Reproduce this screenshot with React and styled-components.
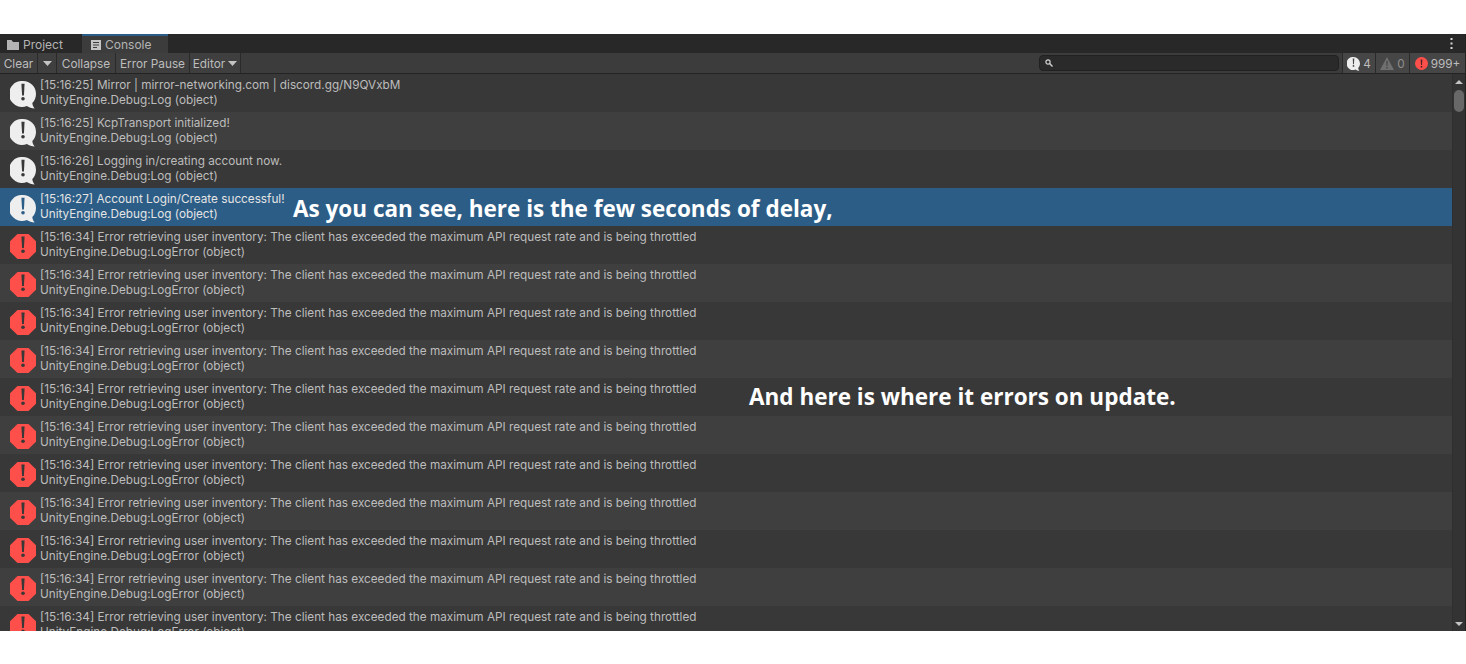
import React from 'react'
import styled, { createGlobalStyle } from 'styled-components'

const Global = createGlobalStyle`
html, body { margin:0; padding:0; background:#fff; }
body { font-family:Inter, "Liberation Sans", sans-serif; }
`

const Page = styled.div`
width:1466px;
height:664px;
padding:34px 0 33px;
box-sizing:border-box;
overflow:hidden;
`
const Editor = styled.div`
height:597px;
display:flex;
flex-direction:column;
background:#383838;
border-right:1px solid #232323;
box-sizing:border-box;
`
const TabBar = styled.div`
height:19px;
flex:none;
display:flex;
background:#282828;
`
const Tab = styled.div`
width:${p => p.$w}px;
display:flex;
align-items:center;
gap:${p => p.$gap}px;
padding-left:${p => p.$pad}px;
padding-top:${p => p.$active ? 0 : 2}px;
box-sizing:border-box;
font-size:12px;
color:#b4b4b4;
background:${p => p.$active ? '#3c3c3c' : 'transparent'};
border-top:${p => p.$active ? '2px solid #2c5d87' : 'none'};
`
const TabMenu = styled.div`
margin-left:auto;
width:27px;
display:flex;
align-items:center;
justify-content:center;
`
const Toolbar = styled.div`
height:21px;
flex:none;
display:flex;
align-items:stretch;
background:#3c3c3c;
border-bottom:1px solid #232323;
box-sizing:border-box;
`
const ToolButton = styled.div`
display:flex;
align-items:center;
justify-content:center;
gap:3px;
width:${p => p.$w}px;
padding-top:1px;
box-sizing:border-box;
font-size:11.8px;
color:#bdbdbd;
background:#3f3f3f;
border-right:1px solid #2a2a2a;
white-space:nowrap;
`
const Split = styled.span`
width:1px;
height:14px;
align-self:center;
background:#2a2a2a;
margin:0 0 0 -1px;
`
const Spacer = styled.div`
flex:1;
`
const Search = styled.div`
width:300px;
height:16px;
margin:2px 3px 0 0;
display:flex;
align-items:center;
padding-left:5px;
box-sizing:border-box;
background:#2a2a2a;
border:1px solid #212121;
border-radius:4px;
`
const Counter = styled.div`
width:${p => p.$w}px;
display:flex;
align-items:center;
justify-content:center;
gap:3px;
padding-top:1px;
box-sizing:border-box;
font-size:11.75px;
color:${p => p.$dim ? '#8f8f8f' : '#bdbdbd'};
background:#464646;
border-left:1px solid #2a2a2a;
`
const Body = styled.div`
flex:1;
min-height:0;
display:flex;
`
const List = styled.div`
flex:1;
min-width:0;
overflow:hidden;
`
const Row = styled.div`
position:relative;
height:38px;
display:flex;
align-items:flex-start;
box-sizing:border-box;
background:${p => p.$selected ? '#2c5d87' : p.$alt ? '#3f3f3f' : '#383838'};
`
const IconBox = styled.div`
width:40px;
height:38px;
flex:none;
display:flex;
align-items:flex-start;
padding:${p => p.$error ? 8 : 7}px 0 0 10px;
box-sizing:border-box;
`
const Lines = styled.div`
padding-top:4px;
font-size:11.75px;
line-height:15px;
color:${p => p.$selected ? '#e4e4e4' : '#bdbdbd'};
white-space:nowrap;
`
const Note = styled.div`
position:absolute;
left:${p => p.$left}px;
top:${p => p.$top}px;
font-family:"Open Sans", sans-serif;
font-size:22.5px;
line-height:28px;
font-weight:700;
color:#fff;
white-space:nowrap;
`
const Scrollbar = styled.div`
position:relative;
width:13px;
flex:none;
background:#333;
border-left:1px solid #2e2e2e;
box-sizing:border-box;
`
const Thumb = styled.div`
position:absolute;
left:1px;
top:16px;
width:10px;
height:22px;
border-radius:5px;
background:#686868;
`
const ArrowUp = styled.div`
position:absolute;
left:2px;
top:6px;
border-left:4px solid transparent;
border-right:4px solid transparent;
border-bottom:4px solid #c4c4c4;
`
const ArrowDown = styled.div`
position:absolute;
left:2px;
bottom:5px;
border-left:4px solid transparent;
border-right:4px solid transparent;
border-top:4px solid #c4c4c4;
`

// small triangle for the dropdown buttons
const Caret = () => (
  <svg width="9" height="5" viewBox="0 0 9 5"><path d="M0 0h9L4.5 5z" fill="#c4c4c4" /></svg>
)

const InfoIcon = ({ size = 26, mark = '#383838' }) => (
  <svg width={size} height={size * 28 / 26} viewBox="0 0 26 28" style={{ flex: 'none' }}>
    <path d="M13 0a13 13 0 0 1 13 13c0 3.600-1.400 6.800-3.700 9.100.2 2 1 3.900 2.400 5.400-2.900-.1-5.600-1-7.800-2.500A13 13 0 1 1 13 0z" fill="#eeeeee" />
    <path d="M11.400 2.800h3.200l-.7 11.700h-1.800z" fill={mark} />
    <circle cx="13" cy="17.800" r="1.800" fill={mark} />
  </svg>
)

const ErrorIcon = ({ mark = '#383838' }) => (
  <svg width="26" height="25" viewBox="0 0 26 25">
    <path d="M7.500 0h11L26 7.200v10.600L18.500 25h-11L0 17.800V7.200z" fill="#fe4f4a" />
    <path d="M11.400 2.500h3.200l-.7 11.500h-1.800z" fill={mark} />
    <circle cx="13" cy="17.300" r="1.800" fill={mark} />
  </svg>
)

const rows = [
  { kind: 'info', text: '[15:16:25] Mirror | mirror-networking.com | discord.gg/N9QVxbM' },
  { kind: 'info', text: '[15:16:25] KcpTransport initialized!' },
  { kind: 'info', text: '[15:16:26] Logging in/creating account now.' },
  { kind: 'info', text: '[15:16:27] Account Login/Create successful!', selected: true, note: 'As you can see, here is the few seconds of delay,', noteLeft: 293, noteTop: 7 },
  ...Array.from({ length: 11 }, (_, i) => ({
    kind: 'error',
    text: '[15:16:34] Error retrieving user inventory: The client has exceeded the maximum API request rate and is being throttled',
    note: i === 4 ? 'And here is where it errors on update.' : null,
    noteLeft: 749,
    noteTop: 5,
  })),
]

const App = () => {
  return (
    <Page>
      <Global />
      <Editor>
        <TabBar>
          <Tab $w={82} $pad={7} $gap={4}>
            <svg width="12" height="10" viewBox="0 0 12 10"><path d="M0 0h4.500l1.500 2H12v8H0z" fill="#b4b4b4" /></svg>
            Project
          </Tab>
          <Tab $w={86} $pad={9} $gap={4} $active>
            <svg width="10" height="10" viewBox="0 0 10 10">
              <path d="M0 0h10v10H0z" fill="#c4c4c4" />
              <path d="M2 2.500h6M2 5h6M2 7.500h4" stroke="#3c3c3c" strokeWidth="1" />
            </svg>
            Console
          </Tab>
          <TabMenu>
            <svg width="3" height="11" viewBox="0 0 3 11">
              <path d="M0.500 0h2v2h-2zM0.500 4.500h2v2h-2zM0.500 9h2v2h-2z" fill="#d8d8d8" />
            </svg>
          </TabMenu>
        </TabBar>
        <Toolbar>
          <ToolButton $w={38}>Clear</ToolButton>
          <Split />
          <ToolButton $w={19}><Caret /></ToolButton>
          <ToolButton $w={59}>Collapse</ToolButton>
          <ToolButton $w={74}>Error Pause</ToolButton>
          <ToolButton $w={51}>Editor <Caret /></ToolButton>
          <Spacer />
          <Search>
            <svg width="8" height="8" viewBox="0 0 8 8">
              <circle cx="3" cy="3" r="2.100" fill="none" stroke="#d0d0d0" strokeWidth="1.200" />
              <path d="M4.600 4.600 7.500 7.500" stroke="#d0d0d0" strokeWidth="1.400" />
            </svg>
          </Search>
          <Counter $w={33}>
            <InfoIcon size={13} mark="#464646" />4
          </Counter>
          <Counter $w={34} $dim>
            <svg width="14" height="13" viewBox="0 0 14 13">
              <path d="M7 0l7 13H0z" fill="#6f6f6f" />
              <path d="M6.300 4h1.400l-.2 5h-1zM6.300 10h1.400v1.400H6.300z" fill="#464646" />
            </svg>
            0
          </Counter>
          <Counter $w={56}>
            <svg width="13" height="13" viewBox="0 0 13 13">
              <circle cx="6.500" cy="6.500" r="6.500" fill="#fe4f4a" />
              <path d="M5.700 2.500h1.600l-.3 5.500H6zM5.700 9h1.600v1.500H5.700z" fill="#4a2020" />
            </svg>
            999+
          </Counter>
        </Toolbar>
        <Body>
          <List>
            {rows.map((r, i) => (
              <Row key={i} $alt={i % 2 === 1} $selected={r.selected}>
                <IconBox $error={r.kind === 'error'}>
                  {r.kind === 'info'
                    ? <InfoIcon mark={r.selected ? '#2c5d87' : '#383838'} />
                    : <ErrorIcon />}
                </IconBox>
                <Lines $selected={r.selected}>
                  {r.text}
                  <br />
                  {r.kind === 'info' ? 'UnityEngine.Debug:Log (object)' : 'UnityEngine.Debug:LogError (object)'}
                </Lines>
                {r.note && <Note $left={r.noteLeft} $top={r.noteTop}>{r.note}</Note>}
              </Row>
            ))}
          </List>
          <Scrollbar>
            <ArrowUp />
            <Thumb />
            <ArrowDown />
          </Scrollbar>
        </Body>
      </Editor>
    </Page>
  )
}

export default App
